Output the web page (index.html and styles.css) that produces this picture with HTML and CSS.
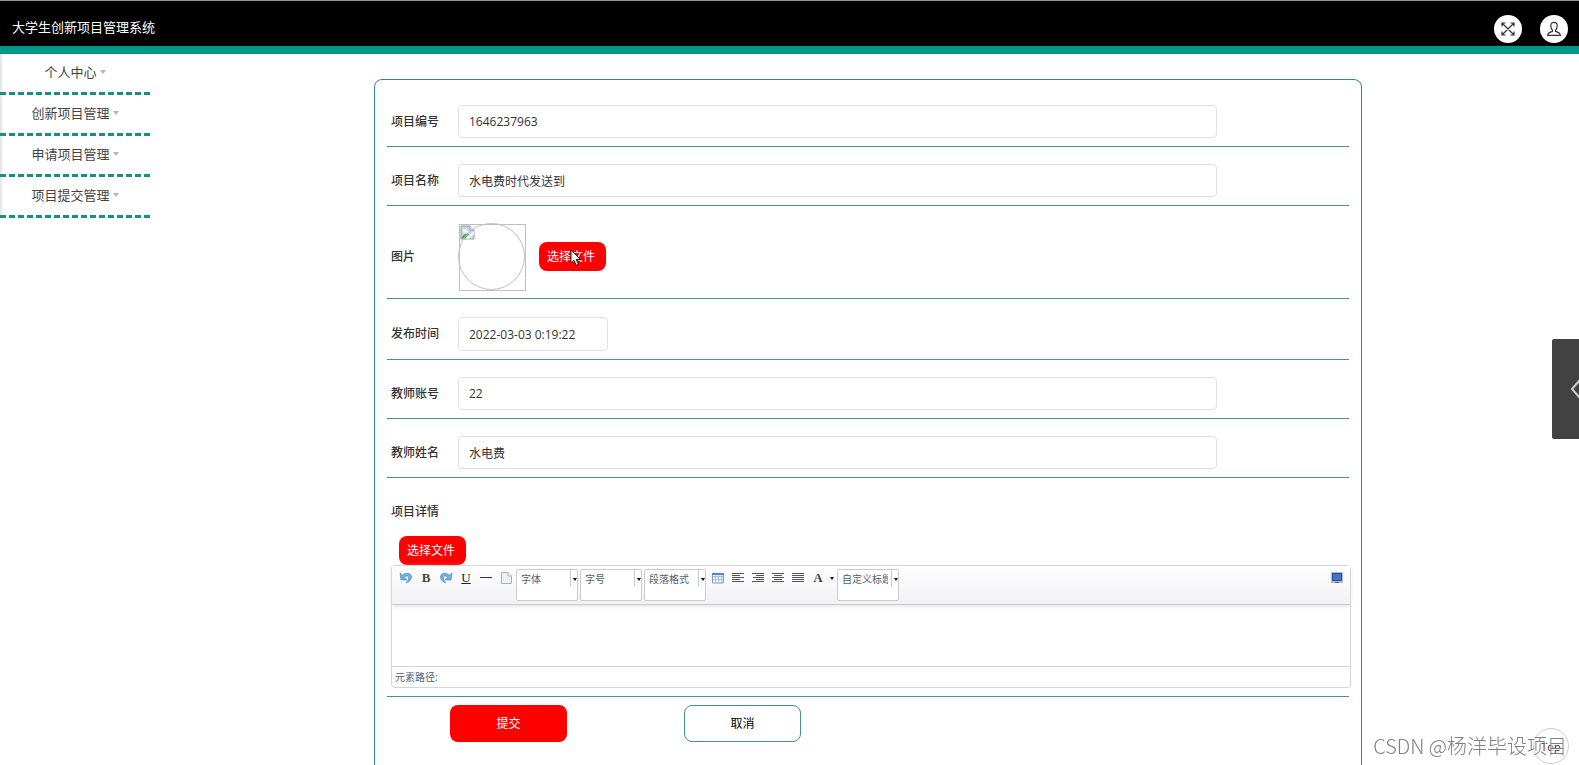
FILE: index.html
```html
<!DOCTYPE html>
<html lang="zh-CN">
<head>
<meta charset="utf-8">
<title>大学生创新项目管理系统</title>
<link rel="stylesheet" href="styles.css">
</head>
<body>
<div class="page">

<header class="header">
  <h1 class="logo">大学生创新项目管理系统</h1>
  <div class="tools">
    <button type="button" class="round" aria-label="全屏">
      <svg width="14" height="14" viewBox="0 0 14 14" fill="none" stroke="#333" stroke-width="1.200"><path d="M1 1L13 13M13 1L1 13M1 4.500V1H4.500M9.500 1H13V4.500M13 9.500V13H9.500M4.500 13H1V9.500"/></svg>
    </button>
    <button type="button" class="round" aria-label="用户">
      <svg width="16" height="16" viewBox="0 0 16 16" fill="none" stroke="#333" stroke-width="1.200"><path d="M6.500 9.200C5.200 8.200 4.800 6.600 4.800 4.600C4.800 2.500 6 1.300 8 1.300S11.200 2.500 11.200 4.600C11.200 6.600 10.800 8.200 9.500 9.200V10.400C12.500 11.200 14.300 11.800 14.300 14.300H1.700C1.700 11.800 3.500 11.200 6.500 10.400Z"/></svg>
    </button>
  </div>
</header>

<div class="wrap">
  <nav class="side">
    <a href="#">个人中心<i class="caret"></i></a>
    <a href="#">创新项目管理<i class="caret"></i></a>
    <a href="#">申请项目管理<i class="caret"></i></a>
    <a href="#">项目提交管理<i class="caret"></i></a>
  </nav>

  <main class="main">
    <form class="card">
      <div class="row">
        <label for="bianhao">项目编号</label>
        <input type="text" id="bianhao" value="1646237963">
      </div>
      <div class="row">
        <label for="mingcheng">项目名称</label>
        <input type="text" id="mingcheng" value="水电费时代发送到">
      </div>
      <div class="row">
        <label for="tupian">图片</label>
        <div class="photo">
          <svg width="68" height="68" viewBox="0 0 68 68" fill="none">
            <rect x="1.500" y="1.500" width="66" height="66" stroke="#c0c0c0"/>
            <path d="M3 3H12L16 7V16H3Z" fill="#c5d8f5" stroke="#9a9a9a"/>
            <path d="M12 3V7H16" fill="#fff" stroke="#9a9a9a"/>
            <path d="M5 8.500a2 2 0 0 1 4-1a1.500 1.500 0 0 1 1 2H5Z" fill="#fff"/>
            <path d="M3.500 15.500C4 12 8 10 11 11L7 15.500Z" fill="#4ba83c"/>
            <path d="M8 16L16 8V11L11 16Z" fill="#fff"/>
            <circle cx="33.500" cy="33.500" r="33" stroke="#c0c0c0"/>
          </svg>
        </div>
        <div class="pick">
          <button type="button" class="file" id="tupian">选择文件</button>
          <svg class="cursor" width="12" height="18" viewBox="0 0 12 18"><path d="M1 1V14L4 11.300L6.200 16.300L8.400 15.300L6.200 10.500H10.500Z" fill="#fff" stroke="#222"/></svg>
        </div>
      </div>
      <div class="row time">
        <label for="shijian">发布时间</label>
        <input type="text" id="shijian" value="2022-03-03 0:19:22">
      </div>
      <div class="row">
        <label for="zhanghao">教师账号</label>
        <input type="text" id="zhanghao" value="22">
      </div>
      <div class="row">
        <label for="xingming">教师姓名</label>
        <input type="text" id="xingming" value="水电费">
      </div>
      <div class="row detail">
        <label for="xiangqing">项目详情</label>
        <button type="button" class="file">选择文件</button>
        <div class="editor">
          <div class="toolbar">
            <button type="button" aria-label="撤销"><svg viewBox="0 0 16 16"><path d="M2 3L3 10H9L6.500 7.500C8 5.500 10.500 5.500 10.500 8C10.500 10 9.500 11.500 8 13C11.500 12 13.500 9.500 13.500 7C13.500 2.500 7.500 2 4.500 5.500Z" fill="#6fb1e6" stroke="#3580c0" stroke-width=".6"/></svg></button>
            <button type="button" class="serif">B</button>
            <button type="button" aria-label="重做"><svg viewBox="0 0 16 16"><path d="M14 3L13 10H7L9.500 7.500C8 5.500 5.500 5.500 5.500 8C5.500 10 6.500 11.500 8 13C4.500 12 2.500 9.500 2.500 7C2.500 2.500 8.500 2 11.500 5.500Z" fill="#6fb1e6" stroke="#3580c0" stroke-width=".6"/></svg></button>
            <button type="button" class="serif under">U</button>
            <button type="button" aria-label="分隔线"><svg viewBox="0 0 16 16"><path d="M2 7.500H14" stroke="#333"/></svg></button>
            <button type="button" aria-label="清空"><svg viewBox="0 0 16 16"><path d="M3.500 2.500H10L13.500 6V13.500H3.500Z" fill="#edf1f7" stroke="#a9b0bb"/><path d="M10 2.500V6H13.500" fill="#fff" stroke="#a9b0bb"/></svg></button>
            <span class="combo"><select aria-label="字体"><option>字体</option></select></span>
            <span class="combo"><select aria-label="字号"><option>字号</option></select></span>
            <span class="combo"><select aria-label="段落格式"><option>段落格式</option></select></span>
            <button type="button" aria-label="表格"><svg viewBox="0 0 16 16"><path d="M3 3H14V13H3Z" fill="#fff"/><path d="M2.500 6.500H13.500M2.500 9.500H13.500M5.500 4V13M8.500 4V13M11.500 4V13" stroke="#a9bfe0"/><path d="M2.500 3.500H13.500V13H2.500Z" fill="none" stroke="#7d9dd0"/><path d="M2 4H14" stroke="#5580d0" stroke-width="2"/></svg></button>
            <button type="button" aria-label="居左"><svg viewBox="0 0 16 16"><path d="M2 3.500H14M2 5.500H10M2 7.500H14M2 9.500H10M2 11.500H14" stroke="#555"/></svg></button>
            <button type="button" aria-label="居右"><svg viewBox="0 0 16 16"><path d="M2 3.500H14M6 5.500H14M3 7.500H14M6 9.500H14M2 11.500H14" stroke="#555"/></svg></button>
            <button type="button" aria-label="居中"><svg viewBox="0 0 16 16"><path d="M2 3.500H14M4 5.500H12M2 7.500H14M4 9.500H12M2 11.500H14" stroke="#555"/></svg></button>
            <button type="button" aria-label="两端对齐"><svg viewBox="0 0 16 16"><path d="M2 3.500H14M2 5.500H14M2 7.500H14M2 9.500H14M2 11.500H14" stroke="#555"/></svg></button>
            <button type="button" class="serif">A</button>
            <button type="button" class="drop" aria-label="字体颜色"></button>
            <span class="combo"><select aria-label="自定义标题"><option>自定义标题</option></select></span>
            <button type="button" class="full" aria-label="全屏"><svg viewBox="0 0 16 16"><path d="M2 2H14V13H2Z" fill="#aebccb"/><path d="M3.500 3.500H12.500V10.500H3.500Z" fill="#4472ce" stroke="#2d4d94"/><path d="M6 12.500H10" stroke="#53606e"/></svg></button>
          </div>
          <textarea id="xiangqing"></textarea>
          <div class="path">元素路径:</div>
        </div>
      </div>
      <div class="btns">
        <button type="submit" class="submit">提交</button>
        <button type="button" class="cancel">取消</button>
      </div>
    </form>
  </main>
</div>

<button type="button" class="drawer" aria-label="展开"><svg width="9" height="20" viewBox="0 0 9 20"><path d="M10 1L2 10L10 19" fill="none" stroke="#ccc" stroke-width="2"/></svg></button>
<a href="#" class="top">Top</a>
<div class="mark">CSDN @杨洋毕设项目</div>

</div>
</body>
</html>
```

FILE: styles.css
```css
* {
  box-sizing: border-box;
}
body {
  margin: 0;
  background: #fff;
  color: #333;
  font: 12px/18px "Open Sans", "Noto Sans CJK SC", sans-serif;
}
button, input, select, textarea {
  margin: 0;
  padding: 0;
  font: inherit;
  color: inherit;
}
button {
  border: 0;
  background: none;
}
.page {
  height: 100vh;
  overflow-y: auto;
  scrollbar-width: none;
}

/* header */
.header {
  display: flex;
  justify-content: space-between;
  height: 54px;
  padding: 0 11px 0 12px;
  border-top: 1px solid #8f9694;
  border-bottom: 8px solid #009688;
  background: #000;
}
.logo {
  margin: 16px 0 0;
  font-size: 13px;
  line-height: 20px;
  font-weight: normal;
  color: #fff;
}
.tools {
  display: flex;
  gap: 18px;
  padding-top: 14px;
}
.round {
  display: flex;
  align-items: center;
  justify-content: center;
  width: 28px;
  height: 28px;
  border-radius: 50%;
  background: #fff;
}

.wrap {
  display: flex;
  align-items: flex-start;
}

/* sidebar */
.side {
  width: 150px;
  flex: none;
  box-shadow: inset 2px 0 2px #e4e4e4;
}
.side a {
  display: flex;
  align-items: center;
  justify-content: center;
  gap: 3px;
  height: 41px;
  padding-bottom: 2px;
  border-bottom: 3px dashed #16907f;
  font-size: 13px;
  color: #444;
  text-decoration: none;
}
.caret {
  border: 3px solid transparent;
  border-top: 4px solid #b5b5b5;
  border-bottom: 0;
}

/* form */
.main {
  flex: 1;
  padding: 25px 217px 0 224px;
}
.card {
  min-height: 760px;
  padding: 8px 12px;
  border: 1px solid #2e8b82;
  border-radius: 8px;
}
.row {
  display: flex;
  align-items: center;
  padding: 17px 0 8px 4px;
  border-bottom: 1px solid #3d978d;
}
.row label {
  width: 67px;
  flex: none;
  font-weight: 500;
}
.row input {
  flex: 1;
  height: 33px;
  margin-right: 132px;
  padding: 0 10px;
  border: 1px solid #e2e2e2;
  border-radius: 4px;
  outline: none;
}
.row.time {
  padding-top: 18px;
}
.time input {
  flex: none;
  width: 150px;
  height: 34px;
}
.photo {
  height: 67px;
}
.pick {
  position: relative;
  margin-left: 13px;
}
.file {
  display: block;
  width: 67px;
  height: 29px;
  padding-right: 3px;
  border-radius: 8px;
  background: #f00;
  color: #fff;
}
.cursor {
  position: absolute;
  left: 31px;
  top: 7px;
}
.row.detail {
  display: block;
  padding-top: 25px;
}
.detail label {
  display: block;
}
.detail .file {
  margin: 15px 0 0 8px;
}

/* rich text editor */
.editor {
  margin-right: -2px;
  border: 1px solid #d4d4d4;
  border-radius: 4px;
  font-size: 10px;
  color: #4f6272;
}
.toolbar {
  display: flex;
  align-items: flex-start;
  height: 39px;
  padding: 3px 3px 3px 4px;
  border-bottom: 1px solid #ccc;
  background: linear-gradient(#fff, #f1f0f3);
  box-shadow: 0 1px 4px #ddd;
}
.toolbar button {
  display: flex;
  align-items: center;
  justify-content: center;
  width: 20px;
  height: 18px;
}
.toolbar svg {
  width: 16px;
  height: 16px;
}
.toolbar .serif {
  font: bold 13px/18px "Liberation Serif", serif;
  color: #444;
}
.toolbar .under {
  font-weight: normal;
  color: #222;
  text-decoration: underline;
}
.combo {
  position: relative;
  width: 62px;
  height: 32px;
  margin-right: 2px;
  border: 1px solid #ccc;
  border-radius: 2px;
  background: #fff;
}
.combo select {
  appearance: none;
  display: block;
  width: 50px;
  height: 18px;
  padding-left: 4px;
  border: 0;
  background: none;
  overflow: hidden;
}
.combo::before {
  content: "";
  position: absolute;
  right: 6px;
  top: 0;
  height: 17px;
  border-left: 1px solid #ccc;
}
.combo::after, .drop::after {
  content: "";
  border: 2px solid transparent;
  border-top: 3px solid #111;
  border-bottom: 0;
}
.combo::after {
  position: absolute;
  right: 0;
  top: 8px;
}
.toolbar .drop {
  width: 8px;
  margin-right: 1px;
}
.toolbar .full {
  margin-left: auto;
}
.editor textarea {
  display: block;
  width: 100%;
  height: 61px;
  border: 0;
  background: none;
  resize: none;
  outline: none;
}
.path {
  height: 21px;
  padding-left: 3px;
  border-top: 1px solid #d4d4d4;
  line-height: 20px;
}

.btns {
  display: flex;
  gap: 117px;
  padding: 8px 0 0 63px;
}
.btns button {
  width: 117px;
  height: 37px;
  border-radius: 8px;
}
.submit {
  background: #f00;
  color: #fff;
}
.cancel {
  border: 1px solid #3d978d;
  color: #000;
}

/* things floating over the page */
.drawer {
  position: fixed;
  right: 0;
  top: 339px;
  display: flex;
  align-items: center;
  justify-content: flex-end;
  width: 27px;
  height: 100px;
  border-radius: 2px 0 0 2px;
  background: #424242;
}
.top {
  position: fixed;
  right: 10px;
  bottom: 1px;
  width: 36px;
  height: 36px;
  border: 1px solid #ccc;
  border-radius: 50%;
  background: #fff;
  font-size: 11px;
  line-height: 36px;
  text-align: center;
  color: #222;
  text-decoration: none;
}
.mark {
  position: fixed;
  right: 12px;
  bottom: 5px;
  font-family: "Noto Sans CJK SC", sans-serif;
  font-size: 20px;
  line-height: 28px;
  font-weight: 300;
  color: #808080;
  text-shadow: 1px 1px 0 #fff;
  pointer-events: none;
}
```
